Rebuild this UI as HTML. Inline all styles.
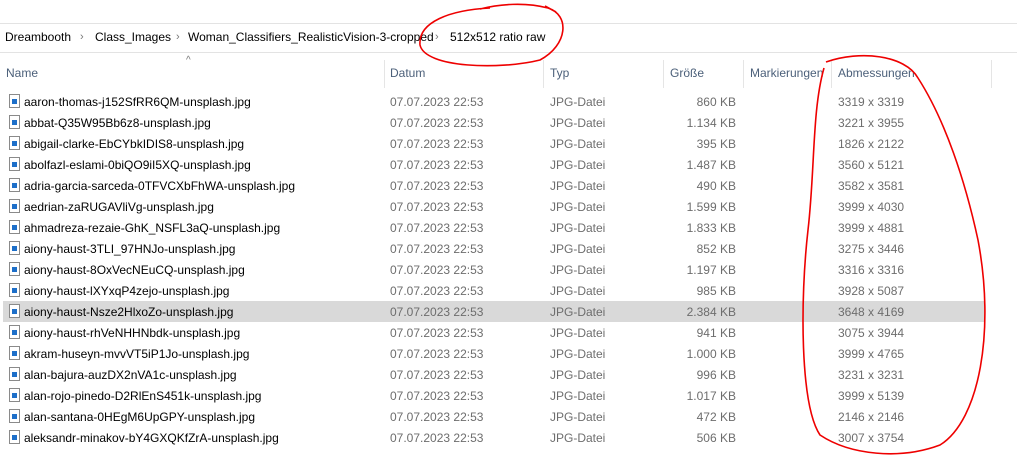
<!DOCTYPE html>
<html><head><meta charset="utf-8"><style>
body{margin:0;width:1017px;height:458px;background:#fff;font-family:"Liberation Sans",sans-serif;font-size:12px;overflow:hidden;position:relative;color:#000}
.a{position:absolute;white-space:nowrap}
.bc{top:30px;color:#000}
.ch{position:absolute;top:31px;color:#777;font-size:11px}
.hd{top:66px;color:#4c607a}
.sep{position:absolute;top:60px;width:1px;height:28px;background:#e5e5e5}
.row{position:absolute;left:3px;width:982px;height:21px}
.row span{position:absolute;top:4px;white-space:nowrap}
.g{color:#6d6d6d}
.ic{position:absolute;left:6px;top:3px;width:11px;height:14px;border:1px solid #8a8a8a;box-sizing:border-box;background:#fff}
.ic:after{content:"";position:absolute;left:2px;top:4px;width:5px;height:5px;background:#1d6fc9}
</style></head><body>
<div style="position:absolute;left:0;top:23px;width:1017px;height:1px;background:#e3e3e3"></div>
<div style="position:absolute;left:0;top:52px;width:1017px;height:1px;background:#e3e3e3"></div>
<div class="a bc" style="left:5px">Dreambooth</div>
<div class="ch" style="left:80px">›</div>
<div class="a bc" style="left:95px">Class_Images</div>
<div class="ch" style="left:176px">›</div>
<div class="a bc" style="left:188px">Woman_Classifiers_RealisticVision-3-cropped</div>
<div class="ch" style="left:435px">›</div>
<div class="a bc" style="left:450px">512x512 ratio raw</div>
<div class="a" style="left:186px;top:55px;color:#777;font-size:10px">^</div>
<div class="a hd" style="left:6px">Name</div>
<div class="sep" style="left:384px"></div>
<div class="a hd" style="left:390px">Datum</div>
<div class="sep" style="left:543px"></div>
<div class="a hd" style="left:550px">Typ</div>
<div class="sep" style="left:663px"></div>
<div class="a hd" style="left:670px">Größe</div>
<div class="sep" style="left:743px"></div>
<div class="a hd" style="left:750px">Markierungen</div>
<div class="sep" style="left:831px"></div>
<div class="a hd" style="left:838px">Abmessungen</div>
<div class="sep" style="left:991px"></div>
<div id="rows"></div>
<script>
var d=[["aaron-thomas-j152SfRR6QM-unsplash.jpg","860 KB","3319 x 3319"],["abbat-Q35W95Bb6z8-unsplash.jpg","1.134 KB","3221 x 3955"],["abigail-clarke-EbCYbkIDIS8-unsplash.jpg","395 KB","1826 x 2122"],["abolfazl-eslami-0biQO9iI5XQ-unsplash.jpg","1.487 KB","3560 x 5121"],["adria-garcia-sarceda-0TFVCXbFhWA-unsplash.jpg","490 KB","3582 x 3581"],["aedrian-zaRUGAVliVg-unsplash.jpg","1.599 KB","3999 x 4030"],["ahmadreza-rezaie-GhK_NSFL3aQ-unsplash.jpg","1.833 KB","3999 x 4881"],["aiony-haust-3TLI_97HNJo-unsplash.jpg","852 KB","3275 x 3446"],["aiony-haust-8OxVecNEuCQ-unsplash.jpg","1.197 KB","3316 x 3316"],["aiony-haust-lXYxqP4zejo-unsplash.jpg","985 KB","3928 x 5087"],["aiony-haust-Nsze2HlxoZo-unsplash.jpg","2.384 KB","3648 x 4169"],["aiony-haust-rhVeNHHNbdk-unsplash.jpg","941 KB","3075 x 3944"],["akram-huseyn-mvvVT5iP1Jo-unsplash.jpg","1.000 KB","3999 x 4765"],["alan-bajura-auzDX2nVA1c-unsplash.jpg","996 KB","3231 x 3231"],["alan-rojo-pinedo-D2RlEnS451k-unsplash.jpg","1.017 KB","3999 x 5139"],["alan-santana-0HEgM6UpGPY-unsplash.jpg","472 KB","2146 x 2146"],["aleksandr-minakov-bY4GXQKfZrA-unsplash.jpg","506 KB","3007 x 3754"]];
var h="";d.forEach(function(r,i){h+='<div class="row" style="top:'+(91+i*21)+'px;'+(i==10?'background:#d9d9d9':'')+'"><div class="ic"></div><span style="left:21px">'+r[0]+'</span><span class="g" style="left:387px">07.07.2023 22:53</span><span class="g" style="left:547px">JPG-Datei</span><span class="g" style="right:249px">'+r[1]+'</span><span class="g" style="left:835px">'+r[2]+'</span></div>'});
document.getElementById("rows").innerHTML=h;
</script>
<svg style="position:absolute;left:0;top:0" width="1017" height="458"><g fill="none" stroke="#e00" stroke-width="1.6">
<path d="M490 8 C450 10 418 22 420 45 C425 68 500 70 540 60 C568 45 570 15 548 8 C525 2 500 4 480 9 M545 6 L556 12"/>
<path d="M826 62 C860 50 905 55 918 78 C945 120 965 180 978 240 C995 330 980 420 940 445 C900 460 850 455 820 435 C800 405 800 300 808 230 C815 170 812 110 824 68"/>
</g></svg>
</body></html>
